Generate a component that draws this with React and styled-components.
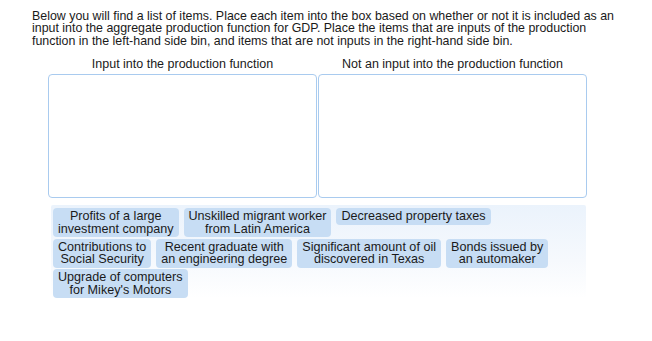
import React from 'react'
import styled, {createGlobalStyle} from 'styled-components'

const Global = createGlobalStyle`
    body {
        margin: 0;
        background: #ffffff;
        font-family: "Liberation Sans", Arial, sans-serif;
        color: #1a1a1a;
    }
`

const Page = styled.div`
    padding: 10px 0 0 32px;
    width: 610px;
`

const Prompt = styled.p`
    margin: 0;
    font-size: 12.4px;
    line-height: 12.4px;
    white-space: nowrap;
`

const Bins = styled.div`
    display: grid;
    grid-template-columns: 269px 269px;
    column-gap: 1px;
    margin: 10px 0 0 16px;
`

const BinLabel = styled.div`
    text-align: center;
    font-size: 12.5px;
    line-height: 14px;
    padding-bottom: 3px;
`

const Bin = styled.div`
    height: 122px;
    border: 1px solid #a9cbef;
    border-radius: 4px;
`

const Tray = styled.div`
    margin: 7px 0 0 19px;
    width: 533px;
    min-height: 83px;
    padding: 3px 0 0 2px;
    display: flex;
    flex-wrap: wrap;
    align-content: flex-start;
    align-items: flex-start;
    gap: 1.5px 5px;
    background: linear-gradient(to bottom, #ebf3fc 0%, #f6f9fd 60%, #ffffff 100%);
    border-radius: 2px;
`

const Chip = styled.div`
    box-sizing: border-box;
    padding: 2px 5px;
    background: #c7ddf4;
    border-radius: 4px;
    font-size: 12.6px;
    line-height: 12.5px;
    text-align: center;
    color: #1a1a1a;
    white-space: nowrap;
`

const items = [
    ['Profits of a large', 'investment company'],
    ['Unskilled migrant worker', 'from Latin America'],
    ['Decreased property taxes'],
    ['Contributions to', 'Social Security'],
    ['Recent graduate with', 'an engineering degree'],
    ['Significant amount of oil', 'discovered in Texas'],
    ['Bonds issued by', 'an automaker'],
    ['Upgrade of computers', "for Mikey's Motors"],
]

const promptLines = [
    'Below you will find a list of items. Place each item into the box based on whether or not it is included as an',
    'input into the aggregate production function for GDP. Place the items that are inputs of the production',
    'function in the left-hand side bin, and items that are not inputs in the right-hand side bin.',
]

const Lines = ({lines}) => lines.map((l, j) => (
    <React.Fragment key={j}>{j > 0 && <br/>}{l}</React.Fragment>
))

export default function App() {
    return (
        <Page>
            <Global/>
            <Prompt><Lines lines={promptLines}/></Prompt>
            <Bins>
                <BinLabel>Input into the production function</BinLabel>
                <BinLabel>Not an input into the production function</BinLabel>
                <Bin/>
                <Bin/>
            </Bins>
            <Tray>
                {items.map((lines, i) => (
                    <Chip key={i}><Lines lines={lines}/></Chip>
                ))}
            </Tray>
        </Page>
    )
}
